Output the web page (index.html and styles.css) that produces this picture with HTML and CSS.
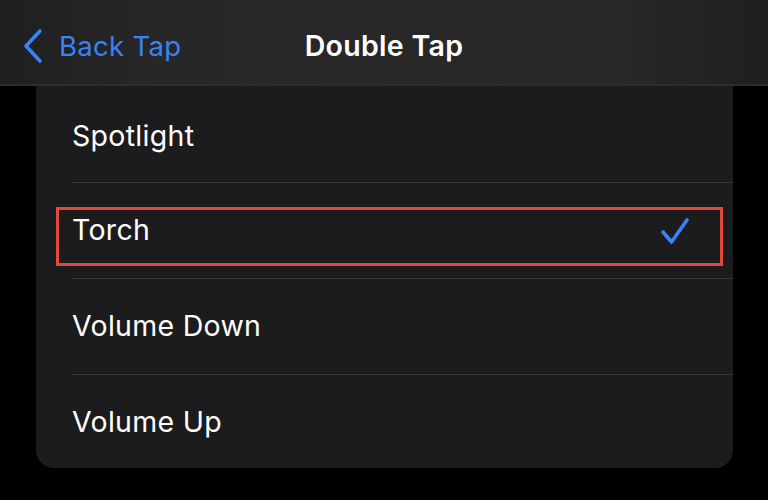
FILE: index.html
```html
<!DOCTYPE html>
<html>
<head>
<meta charset="utf-8">
<link rel="stylesheet" href="styles.css">
</head>
<body>
<header class="nav">
  <a class="back">
    <svg class="chev" width="24" height="36" viewBox="0 0 24 36"><path d="M19 3 L5 18 L19 33" fill="none" stroke="#3a82f6" stroke-width="3.6" stroke-linecap="round" stroke-linejoin="round"/></svg>
    <span class="back-label">Back Tap</span>
  </a>
  <h1 class="title">Double Tap</h1>
</header>
<main class="card">
  <div class="row first"><span class="label">Spotlight</span></div>
  <div class="row selected">
    <span class="label">Torch</span>
    <svg class="check" width="32" height="28" viewBox="0 0 32 28"><path d="M4 15 L12.5 25 L28 3" fill="none" stroke="#3a82f6" stroke-width="3.6" stroke-linecap="round" stroke-linejoin="round"/></svg>
    <div class="highlight"></div>
  </div>
  <div class="row"><span class="label">Volume Down</span></div>
  <div class="row last"><span class="label">Volume Up</span></div>
</main>
</body>
</html>
```
FILE: styles.css
```css
html, body {
  margin: 0;
  padding: 0;
  background: #000;
  font-family: Inter, "Noto Sans", sans-serif;
  color: #fff;
}
.nav {
  height: 86px;
  background: linear-gradient(90deg, #1f1f1f 0%, #272727 20%, #282828 80%, #1f1f1f 100%);
  position: relative;
  display: flex;
  align-items: center;
  justify-content: center;
  border-bottom: 2px solid #2d2d2d;
  box-sizing: border-box;
}
.back {
  position: absolute;
  left: 21px;
  top: 28px;
  display: flex;
  align-items: center;
  gap: 14px;
  color: #3a82f6;
}
.back-label {
  font-size: 27.5px;
  letter-spacing: 0.3px;
}
.title {
  margin: 0;
  font-size: 28.5px;
  font-weight: 600;
  letter-spacing: 0.3px;
  padding-top: 6px;
}
.card {
  margin: 0 35px 0 36px;
  background: #1c1c1e;
  border-radius: 0 0 18px 18px;
  padding-left: 36px;
}
.row {
  position: relative;
  box-sizing: border-box;
  height: 96px;
  border-bottom: 1px solid #363638;
  display: flex;
  align-items: center;
  justify-content: space-between;
  padding-right: 42px;
}
.row.first { height: 97px; padding-top: 4px; }
.row.last { border-bottom: none; height: 93px; padding-top: 2px; }
.label {
  font-size: 28.5px;
  font-weight: 400;
  letter-spacing: 0.3px;
  padding-bottom: 2px;
}
.check { margin-top: 0; }
.highlight {
  position: absolute;
  left: -16px;
  right: 10px;
  top: 24px;
  height: 59px;
  border: 3px solid #e4483b;
  box-sizing: border-box;
}
```
